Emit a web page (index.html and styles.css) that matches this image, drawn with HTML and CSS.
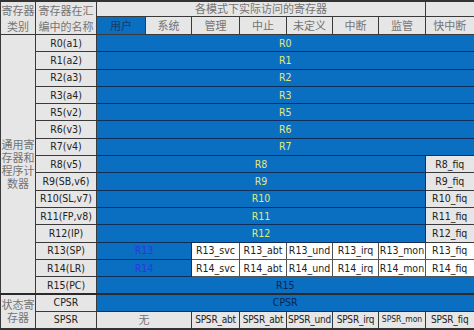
FILE: index.html
```html
<!DOCTYPE html>
<html lang="zh">
<head>
<meta charset="utf-8">
<link rel="stylesheet" href="styles.css">
</head>
<body>
<table class="regs">
  <colgroup>
    <col class="c-type"><col class="c-name"><col class="c-usr"><col class="c-sys"><col class="c-svc"><col class="c-abt"><col class="c-und"><col class="c-irq"><col class="c-mon"><col class="c-fiq">
  </colgroup>
  <tr class="h1">
    <td class="hd two" rowspan="2">寄存器<br>类别</td>
    <td class="hd two" rowspan="2">寄存器在汇<br>编中的名称</td>
    <td class="hd" colspan="7">各模式下实际访问的寄存器</td>
    <td class="hd"></td>
  </tr>
  <tr class="h2">
    <td class="hd usr">用户</td>
    <td class="hd">系统</td>
    <td class="hd">管理</td>
    <td class="hd">中止</td>
    <td class="hd">未定义</td>
    <td class="hd">中断</td>
    <td class="hd">监管</td>
    <td class="hd">快中断</td>
  </tr>
  <tr><td class="cat" rowspan="15">通用寄<br>存器和<br>程序计<br>数器</td><td class="nm">R0(a1)</td><td class="bl" colspan="8">R0</td></tr>
  <tr><td class="nm">R1(a2)</td><td class="bl" colspan="8">R1</td></tr>
  <tr><td class="nm">R2(a3)</td><td class="bl" colspan="8">R2</td></tr>
  <tr><td class="nm">R3(a4)</td><td class="bl" colspan="8">R3</td></tr>
  <tr><td class="nm">R5(v2)</td><td class="bl" colspan="8">R5</td></tr>
  <tr><td class="nm">R6(v3)</td><td class="bl" colspan="8">R6</td></tr>
  <tr><td class="nm">R7(v4)</td><td class="bl" colspan="8">R7</td></tr>
  <tr><td class="nm">R8(v5)</td><td class="bl" colspan="7">R8</td><td class="fq">R8_fiq</td></tr>
  <tr><td class="nm">R9(SB,v6)</td><td class="bl" colspan="7">R9</td><td class="fq">R9_fiq</td></tr>
  <tr><td class="nm">R10(SL,v7)</td><td class="bl" colspan="7">R10</td><td class="fq">R10_fiq</td></tr>
  <tr><td class="nm">R11(FP,v8)</td><td class="bl" colspan="7">R11</td><td class="fq">R11_fiq</td></tr>
  <tr><td class="nm">R12(IP)</td><td class="bl" colspan="7">R12</td><td class="fq">R12_fiq</td></tr>
  <tr><td class="nm">R13(SP)</td><td class="bl blue-t" colspan="2">R13</td><td class="wh">R13_svc</td><td class="wh">R13_abt</td><td class="wh">R13_und</td><td class="wh">R13_irq</td><td class="wh">R13_mon</td><td class="wh">R13_fiq</td></tr>
  <tr><td class="nm">R14(LR)</td><td class="bl blue-t" colspan="2">R14</td><td class="wh">R14_svc</td><td class="wh">R14_abt</td><td class="wh">R14_und</td><td class="wh">R14_irq</td><td class="wh">R14_mon</td><td class="wh">R14_fiq</td></tr>
  <tr><td class="nm">R15(PC)</td><td class="bl navy-t" colspan="8">R15</td></tr>
  <tr class="st"><td class="cat" rowspan="2">状态寄<br>存器</td><td class="nm">CPSR</td><td class="bl navy-t" colspan="8">CPSR</td></tr>
  <tr><td class="nm">SPSR</td><td class="gy zh" colspan="2">无</td><td class="gy sp">SPSR_abt</td><td class="gy sp">SPSR_abt</td><td class="gy sp">SPSR_und</td><td class="gy sp">SPSR_irq</td><td class="gy small">SPSR_mon</td><td class="gy sp">SPSR_fiq</td></tr>
</table>
</body>
</html>
```
FILE: styles.css
```css
html, body {
  margin: 0;
  padding: 0;
  background: #ffffff;
}

.regs {
  border-collapse: collapse;
  table-layout: fixed;
  width: 474px;
  font-family: "DejaVu Sans Condensed", "DejaVu Sans", sans-serif;
  font-stretch: condensed;
  font-size: 10.5px;
  color: #222;
  border-top: 2px solid #333;
  border-bottom: 2px solid #333;
  border-right: 2px solid #333;
}

.c-type { width: 35px; }
.c-name { width: 61px; }
.c-usr { width: 49px; }
.c-sys { width: 46px; }
.c-svc { width: 48px; }
.c-abt { width: 47px; }
.c-und { width: 46px; }
.c-irq { width: 46px; }
.c-mon { width: 47px; }
.c-fiq { width: 49px; }

.regs td {
  padding: 0;
  text-align: center;
  vertical-align: middle;
  border: 1px solid #3a3a3a;
  white-space: nowrap;
  overflow: hidden;
  line-height: 13px;
}

.regs tr { height: 17.3px; }
.regs tr.h1 { height: 15px; }
.regs tr.h2 { height: 18px; }

.hd, .cat, .zh {
  font-family: "Noto Sans CJK SC", sans-serif;
  font-stretch: normal;
  color: #747474;
  font-size: 11px;
  background: #e6e6e6;
}

.hd { line-height: 14px; }
.hd.two { line-height: 16px; }
.cat { line-height: 14px; }

.hd.usr {
  background: #0a6fc0;
  color: #173a6b;
}

.nm {
  background: #e6e6e6;
}

.bl {
  background: #0a6fc0;
  color: #e3e87e;
  border-color: #0f2f5a !important;
}

.blue-t { color: #2d35e6; }
.navy-t { color: #0b2550; }

.fq, .gy {
  background: #e6e6e6;
}

.sp {
  font-size: 10px;
  letter-spacing: -0.2px;
}

.wh {
  background: #ffffff;
  border-color: #555 !important;
}

.small { font-size: 8.5px; }

.st td { border-top: 2px solid #2a2a2a; }
.st td.bl { border-top: 2px solid #2a2a2a !important; }
```
